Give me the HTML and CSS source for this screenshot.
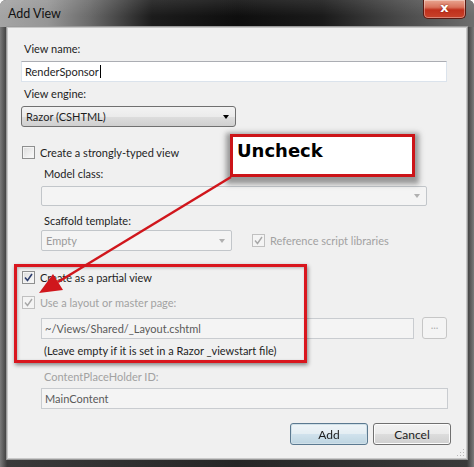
FILE: index.html
```html
<!DOCTYPE html>
<html lang="en">
<head>
  <meta charset="UTF-8">
  <title>Add View</title>
  <link rel="stylesheet" href="styles.css">
</head>
<body>

<div class="window">
  <div class="titlebar">
    <span class="title">Add View</span>
    <span class="close">x</span>
  </div>

  <div class="client">
    <div class="lbl">View name:</div>
    <div class="textbox">RenderSponsor<span class="caret"></span></div>

    <div class="lbl gap-s">View engine:</div>
    <div class="combo engine">
      <span>Razor (CSHTML)</span>
      <span class="arrow"></span>
    </div>

    <div class="check-row gap-l">
      <span class="box"></span>
      <span>Create a strongly-typed view</span>
    </div>

    <div class="indent">
      <div class="lbl gap-m">Model class:</div>
      <div class="combo disabled model"><span></span><span class="arrow"></span></div>

      <div class="lbl gap-m">Scaffold template:</div>
      <div class="scaffold-row">
        <div class="combo disabled scaffold"><span>Empty</span><span class="arrow"></span></div>
        <div class="check-row off">
          <span class="box checked">
            <svg viewBox="0 0 11 11" width="11" height="11"><polyline points="2 5.5 4.5 8.5 9 2" fill="none" stroke="#a8a8a8" stroke-width="1.4"/></svg>
          </span>
          <span>Reference script libraries</span>
        </div>
      </div>
    </div>

    <div class="check-row gap-partial">
      <span class="box checked">
        <svg viewBox="0 0 11 11" width="11" height="11"><polyline points="2 5.5 4.5 8.5 9 2" fill="none" stroke="#2f3f6e" stroke-width="1.6"/></svg>
      </span>
      <span>Create as a partial view</span>
    </div>

    <div class="check-row off gap-layout">
      <span class="box checked">
        <svg viewBox="0 0 11 11" width="11" height="11"><polyline points="2 5.5 4.5 8.5 9 2" fill="none" stroke="#a8a8a8" stroke-width="1.4"/></svg>
      </span>
      <span>Use a layout or master page:</span>
    </div>

    <div class="indent">
      <div class="layout-row">
        <div class="textbox disabled layout">~/Views/Shared/_Layout.cshtml</div>
        <div class="browse">...</div>
      </div>
      <div class="lbl hint">(Leave empty if it is set in a Razor _viewstart file)</div>

      <div class="lbl off gap-cph">ContentPlaceHolder ID:</div>
      <div class="textbox disabled cph">MainContent</div>
    </div>

    <div class="buttons">
      <div class="btn default">Add</div>
      <div class="btn">Cancel</div>
    </div>
    <span class="grip"></span>
  </div>

  <!-- anotaciones encima del dialogo -->
  <div class="redbox"></div>
  <div class="callout">Uncheck</div>
  <svg class="arrow-line" width="474" height="467" viewBox="0 0 474 467">
    <line x1="231" y1="177" x2="58" y2="282" stroke="#d0161c" stroke-width="2.5"/>
    <polygon points="39,293 53,274 63,290" fill="#d0161c"/>
  </svg>
</div>

</body>
</html>
```

FILE: styles.css
```css
body {
  margin: 0;
  padding: 0;
  font-family: Lato, "Noto Sans", sans-serif;
  font-size: 11px;
  color: #1e1e1e;
  background: #fff;
}

.window {
  position: relative;
  width: 474px;
  height: 467px;
  box-sizing: border-box;
  display: flex;
  flex-direction: column;
  background: linear-gradient(90deg, #7a7a7a 0, #3a3a3a 1.5%, #262626 50%, #3a3a3a 98.5%, #7a7a7a 100%);
  border-radius: 6px 6px 0 0;
  overflow: hidden;
}

.titlebar {
  height: 27px;
  flex: 0 0 27px;
  position: relative;
  display: flex;
  align-items: center;
  background:
    linear-gradient(180deg, rgba(255,255,255,.1), rgba(0,0,0,0) 60%),
    linear-gradient(90deg, #a4a4a4 0, #969696 10%, #6a6a6a 19%, #1c1c1c 32%, #0e0e0e 50%, #1a1a1a 68%, #4a4a4a 85%, #6e6e6e 100%);
}

.title {
  margin-left: 8px;
  font-size: 12.5px;
  color: #111;
}

.close {
  position: absolute;
  top: 0;
  right: 8px;
  width: 41px;
  height: 18px;
  border: 1px solid #5a1a12;
  border-top: none;
  border-radius: 0 0 5px 5px;
  background: linear-gradient(180deg, #e9a590 0, #d9735c 40%, #c0301c 55%, #c8422a 100%);
  box-shadow: inset 0 0 0 1px rgba(255,255,255,.35);
  color: #fff;
  font-weight: bold;
  font-size: 13px;
  font-family: "DejaVu Sans", sans-serif;
  text-align: center;
  line-height: 16px;
  text-shadow: 0 0 2px #7a1a10;
}

.client {
  position: relative;
  flex: 1;
  margin: 0 7px 8px 7px;
  padding: 13px 19px 0 13px;
  background: #f0f0f0;
  border: 1px solid #c8c8c8;
  box-shadow: 0 0 0 1px #9a9a9a;
  display: flex;
  flex-direction: column;
}

.lbl {
  height: 16px;
  line-height: 16px;
  padding-left: 3px;
  margin-bottom: 4px;
}

.lbl.off, .check-row.off {
  color: #a2a2a2;
}

.gap-s { margin-top: 4px; }
.gap-m { margin-top: 6px; }
.gap-l { margin-top: 17px; }
.gap-partial { margin-top: 18px; }
.gap-layout { margin-top: 9px; }
.gap-cph { margin-top: 10px; margin-bottom: 3px; }

.textbox {
  height: 19px;
  line-height: 19px;
  padding-left: 3px;
  background: #fff;
  border: 1px solid #dbe3ec;
  border-top-color: #abadb3;
  display: flex;
  align-items: center;
}

.textbox.disabled {
  background: #f4f4f4;
  border-color: #c9ccd0;
  color: #5a5a5a;
}

.caret {
  width: 1px;
  height: 13px;
  background: #000;
  margin-left: 1px;
}

.combo {
  height: 19px;
  box-sizing: content-box;
  border: 1px solid #707070;
  border-radius: 3px;
  background: linear-gradient(180deg, #f3f3f3 0, #ebebeb 50%, #dddddd 51%, #cfcfcf 100%);
  display: flex;
  align-items: center;
  justify-content: space-between;
  padding: 0 6px 0 4px;
}

.combo .arrow {
  width: 0;
  height: 0;
  border-left: 3.5px solid transparent;
  border-right: 3.5px solid transparent;
  border-top: 4px solid #000;
}

.combo.disabled {
  background: #f4f4f4;
  border-color: #c2c6ca;
  color: #9a9a9a;
  border-radius: 2px;
}

.combo.disabled .arrow {
  border-top-color: #b0b0b0;
}

.engine {
  width: 203px;
}

.check-row {
  display: flex;
  align-items: center;
  height: 16px;
  padding-left: 1px;
}

.box {
  width: 11px;
  height: 11px;
  border: 1px solid #8e8f8f;
  background: linear-gradient(135deg, #dcdcdc, #fbfbfb);
  box-shadow: inset 0 0 0 1px #f4f4f4;
  margin-right: 5px;
  display: flex;
  align-items: center;
  justify-content: center;
}

.check-row.off .box {
  border-color: #c0c0c0;
  background: #f4f4f4;
}

.indent {
  margin-left: 20px;
  display: flex;
  flex-direction: column;
}

.model {
  width: 374px;
  height: 18px;
  margin-bottom: 1px;
}

.scaffold-row {
  display: flex;
  align-items: center;
  margin-top: -3px;
}

.scaffold {
  width: 179px;
}

.scaffold-row .check-row {
  margin-left: 19px;
}

.layout-row {
  display: flex;
  align-items: center;
  margin-top: 7px;
}

.layout {
  width: 369px;
  height: 19px;
}

.browse {
  margin-left: 8px;
  width: 23px;
  height: 20px;
  border: 1px solid #c6c6c6;
  border-radius: 3px;
  background: #f4f4f4;
  color: #b0b0b0;
  display: flex;
  justify-content: center;
  line-height: 14px;
}

.hint {
  margin-top: 4px;
  margin-bottom: 0;
}

.cph {
  width: 402px;
  color: #4a4a4a;
}

.buttons {
  display: flex;
  justify-content: flex-end;
  gap: 5px;
  margin-top: 14px;
  margin-right: -4px;
}

.btn {
  width: 76px;
  height: 20px;
  border: 1px solid #707070;
  border-radius: 3px;
  background: linear-gradient(180deg, #f2f2f2 0, #ebebeb 50%, #dddddd 51%, #cfcfcf 100%);
  box-shadow: inset 0 0 0 1px #fcfcfc;
  display: flex;
  align-items: center;
  justify-content: center;
  font-size: 12px;
}

.btn.default {
  border-color: #3c7fb1;
  background: linear-gradient(180deg, #eaf6fd 0, #d9f0fc 50%, #bee6fd 51%, #a7d9f5 100%);
  box-shadow: inset 0 0 0 1px #bfe4f6;
  filter: saturate(.45);
}

.grip {
  position: absolute;
  right: 2px;
  bottom: 2px;
  width: 8px;
  height: 8px;
  background: radial-gradient(circle, #b8b8b8 0.8px, transparent 1px) 0 0 / 3px 3px;
  clip-path: polygon(100% 0, 100% 100%, 0 100%);
}

.redbox {
  position: absolute;
  left: 14px;
  top: 264px;
  width: 287px;
  height: 93px;
  border: 3px solid #d9161e;
  box-shadow: 1px 2px 4px rgba(0,0,0,.45), inset 1px 1px 3px rgba(0,0,0,.25);
}

.callout {
  position: absolute;
  left: 230px;
  top: 134px;
  width: 175px;
  height: 37px;
  padding-left: 4px;
  border: 3px solid #cc1418;
  background: #fff;
  font-family: "DejaVu Sans", "Liberation Sans", sans-serif;
  font-weight: bold;
  font-size: 18px;
  line-height: 28px;
  color: #000;
  box-shadow: 0 3px 5px 4px rgba(80,80,80,.55);
}

.arrow-line {
  position: absolute;
  left: 0;
  top: 0;
  pointer-events: none;
}
```
